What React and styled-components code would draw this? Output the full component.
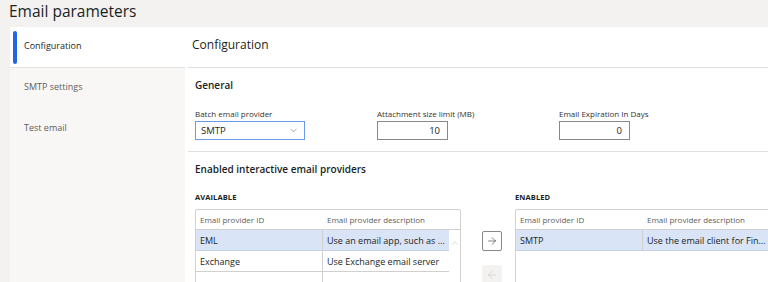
import React from "react";
import styled, { createGlobalStyle } from "styled-components";
import { ChevronDown, ChevronUp, ArrowRight, ArrowLeft } from "lucide-react";

const GlobalStyle = createGlobalStyle`
    body {
        margin: 0;
        background: #f3f2f1;
        font-family: "Open Sans", "Noto Sans", sans-serif;
        color: #323130;
    }
`;

const Page = styled.div`
    width: 768px;
    height: 282px;
    overflow: hidden;
    display: flex;
    flex-direction: column;
    background: #f3f2f1;
`;

const TitleBar = styled.h1`
    margin: 0;
    height: 27px;
    flex-shrink: 0;
    padding-left: 9px;
    font-size: 15.5px;
    font-weight: 400;
    line-height: 22px;
    color: #201f1e;
`;

const Main = styled.div`
    flex: 1;
    margin-left: 10px;
    display: flex;
    gap: 3px;
    background: #fff;
    min-height: 0;
`;

const Nav = styled.nav`
    width: 175px;
    flex-shrink: 0;
    background: #f8f7f6;
    display: flex;
    flex-direction: column;
`;

const NavItem = styled.div`
    height: 41px;
    display: flex;
    align-items: center;
    padding: 0 0 3px 3px;
    box-sizing: border-box;
    font-size: 9px;
    color: ${(p) => (p.$active ? "#201f1e" : "#605e5c")};
    background: ${(p) => (p.$active ? "#fff" : "transparent")};
    border-bottom: 1px solid ${(p) => (p.$active ? "#e6e4e2" : "transparent")};
`;

const NavBar = styled.span`
    width: 4px;
    height: 33px;
    margin: 3px 7px 0 0;
    border-radius: 2px;
    background: ${(p) => (p.$active ? "#2266e3" : "transparent")};
`;

const Content = styled.div`
    flex: 1;
    display: flex;
    flex-direction: column;
    min-width: 0;
`;

const ContentHeader = styled.div`
    height: 41px;
    flex-shrink: 0;
    display: flex;
    align-items: center;
    padding: 0 0 5px 4px;
    box-sizing: border-box;
    font-size: 12px;
    color: #201f1e;
    border-bottom: 1px solid #e1dfdd;
`;

const Section = styled.section`
    padding: 0 0 0 7px;
    border-bottom: ${(p) => (p.$divided ? "1px solid #e1dfdd" : "none")};
    height: ${(p) => p.$h};
    box-sizing: border-box;
    flex-shrink: 0;
`;

const SectionTitle = styled.h2`
    margin: 0;
    font-size: 10px;
    font-weight: 600;
    color: #201f1e;
    line-height: 14px;
    padding-top: ${(p) => p.$top};
`;

const FieldRow = styled.div`
    display: flex;
    margin-top: 16px;
`;

const Field = styled.div`
    width: 182px;
    display: flex;
    flex-direction: column;
`;

const Label = styled.label`
    font-size: 8px;
    color: #323130;
    line-height: 12px;
    margin-bottom: 1px;
`;

const Box = styled.div`
    width: ${(p) => p.$w}px;
    height: 19px;
    box-sizing: border-box;
    border: 1px solid ${(p) => (p.$focus ? "#6a98ec" : "#8a8886")};
    display: flex;
    align-items: center;
    justify-content: ${(p) => (p.$right ? "flex-end" : "space-between")};
    padding: 0 ${(p) => (p.$right ? 7 : 5)}px 0 5px;
    font-size: 9.5px;
    color: #201f1e;
    background: #fff;
`;

const SubTitle = styled.div`
    font-size: 7.5px;
    font-weight: 700;
    color: #201f1e;
    letter-spacing: 0.1px;
    line-height: 12px;
    margin: 15px 0 6px;
`;

const Lists = styled.div`
    display: flex;
    align-items: flex-start;
`;

const ListBlock = styled.div`
    display: flex;
    flex-direction: column;
    flex-shrink: 0;
`;

const Table = styled.div`
    width: ${(p) => p.$w}px;
    height: 110px;
    border: 1px solid #d2d0ce;
    border-radius: 2px;
    box-sizing: border-box;
    display: grid;
    grid-template-columns: ${(p) => p.$cols};
    grid-auto-rows: min-content;
    align-content: start;
    font-size: 9px;
`;

const HeadCell = styled.div`
    height: 19px;
    display: flex;
    align-items: center;
    padding-left: 4px;
    font-size: 8px;
    color: #605e5c;
    border-bottom: 1px solid #d2d0ce;
`;

const Cell = styled.div`
    height: 21px;
    box-sizing: border-box;
    display: flex;
    align-items: center;
    padding-left: 4px;
    white-space: nowrap;
    overflow: hidden;
    color: #201f1e;
    background: ${(p) => (p.$sel ? "#dae4f7" : "#fff")};
    border-bottom: 1px solid ${(p) => (p.$sel ? "#c4cfe2" : "#d2d0ce")};
    border-right: ${(p) => (p.$first ? "1px solid #d2d0ce" : "none")};
`;

const ScrollCell = styled.div`
    grid-row: span ${(p) => p.$span};
    display: flex;
    justify-content: center;
    padding-top: 8px;
    color: #c8c6c4;
`;

const Buttons = styled.div`
    display: flex;
    flex-direction: column;
    gap: 14px;
    margin: 55px 13px 0 21px;
`;

const MoveButton = styled.button`
    width: 20px;
    height: 20px;
    padding: 0;
    display: flex;
    align-items: center;
    justify-content: center;
    border: 1px solid ${(p) => (p.disabled ? "#f3f2f1" : "#8a8886")};
    border-radius: 2px;
    background: ${(p) => (p.disabled ? "#f3f2f1" : "#fff")};
    color: ${(p) => (p.disabled ? "#c8c6c4" : "#323130")};
`;

const available = [
    { id: "EML", desc: "Use an email app, such as ...", sel: true },
    { id: "Exchange", desc: "Use Exchange email server" },
];

const enabled = [{ id: "SMTP", desc: "Use the email client for Fin...", sel: true }];

const ProviderTable = ({ rows, width, cols, scroll }) => (
    <Table $w={width} $cols={cols}>
        <HeadCell>Email provider ID</HeadCell>
        <HeadCell>Email provider description</HeadCell>
        {scroll ? <HeadCell /> : null}
        {rows.map((r, i) => (
            <React.Fragment key={r.id}>
                <Cell $sel={r.sel} $first>{r.id}</Cell>
                <Cell $sel={r.sel}>{r.desc}</Cell>
                {scroll && i === 0 ? (
                    <ScrollCell $span={rows.length + 1}>
                        <ChevronUp size={10} strokeWidth={1.5} />
                    </ScrollCell>
                ) : null}
            </React.Fragment>
        ))}
        {scroll ? (
            <>
                <Cell $first />
                <Cell />
            </>
        ) : null}
    </Table>
);

const App = () => {
    return (
        <Page>
            <GlobalStyle />
            <TitleBar>Email parameters</TitleBar>
            <Main>
                <Nav>
                    <NavItem $active>
                        <NavBar $active />
                        Configuration
                    </NavItem>
                    <NavItem>
                        <NavBar />
                        SMTP settings
                    </NavItem>
                    <NavItem>
                        <NavBar />
                        Test email
                    </NavItem>
                </Nav>

                <Content>
                    <ContentHeader>Configuration</ContentHeader>

                    <Section $divided $h="84px">
                        <SectionTitle $top="10px">General</SectionTitle>
                        <FieldRow>
                            <Field>
                                <Label>Batch email provider</Label>
                                <Box $w={110} $focus>
                                    SMTP
                                    <ChevronDown size={11} strokeWidth={1.2} color="#605e5c" />
                                </Box>
                            </Field>
                            <Field>
                                <Label>Attachment size limit (MB)</Label>
                                <Box $w={71} $right>10</Box>
                            </Field>
                            <Field>
                                <Label>Email Expiration In Days</Label>
                                <Box $w={71} $right>0</Box>
                            </Field>
                        </FieldRow>
                    </Section>

                    <Section>
                        <SectionTitle $top="10px">Enabled interactive email providers</SectionTitle>
                        <Lists>
                            <ListBlock>
                                <SubTitle>AVAILABLE</SubTitle>
                                <ProviderTable rows={available} width={266} cols="127px 126px 1fr" scroll />
                            </ListBlock>
                            <Buttons>
                                <MoveButton>
                                    <ArrowRight size={12} strokeWidth={1.2} />
                                </MoveButton>
                                <MoveButton disabled>
                                    <ArrowLeft size={12} strokeWidth={1.2} />
                                </MoveButton>
                            </Buttons>
                            <ListBlock>
                                <SubTitle>ENABLED</SubTitle>
                                <ProviderTable rows={enabled} width={266} cols="127px 1fr" />
                            </ListBlock>
                        </Lists>
                    </Section>
                </Content>
            </Main>
        </Page>
    );
};

export default App;
